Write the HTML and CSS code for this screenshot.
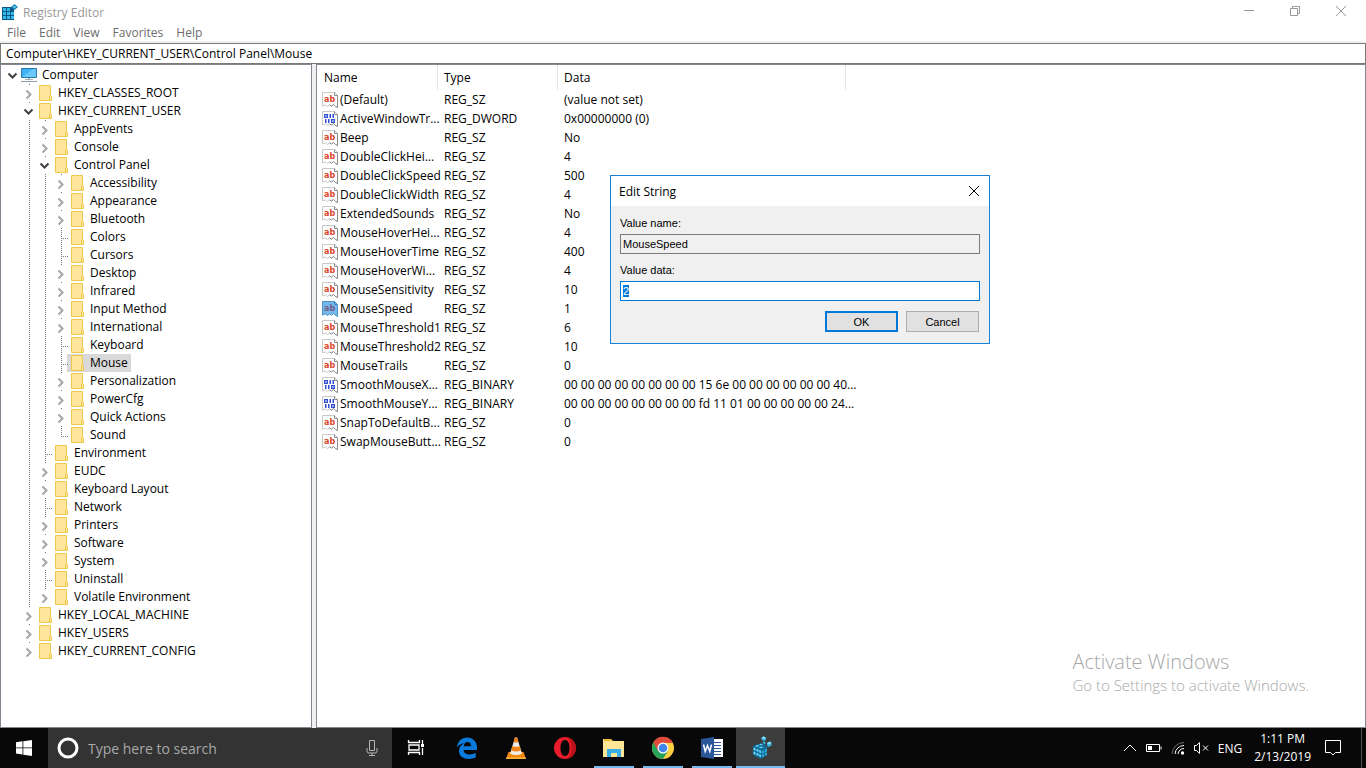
FILE: index.html
```html
<!DOCTYPE html>
<html lang="en">
<head>
  <meta charset="UTF-8" />
  <meta name="viewport" content="width=device-width, initial-scale=1" />
  <title>Registry Editor</title>
  <link rel="stylesheet" href="styles.css">
</head>
<body>
  <!-- shared icons -->
  <svg class="sprite" aria-hidden="true">
    <symbol id="folder" viewBox="0 0 16 16">
      <path d="M.5.5h11v10l1 1v4h-12z" fill="#ffe69c" stroke="#ecc84c"/>
      <path d="M10.500 15v-4l1-1" fill="none" stroke="#ecc84c"/>
    </symbol>
    <symbol id="closed" viewBox="0 0 16 17">
      <path d="M6.500 5.500l4 4-4 4" fill="none" stroke="#a6a6a6" stroke-width="2"/>
    </symbol>
    <symbol id="opened" viewBox="0 0 16 17">
      <path d="M4.500 6.500l4 4 4-4" fill="none" stroke="#404040" stroke-width="2"/>
    </symbol>
    <symbol id="page" viewBox="0 0 16 16">
      <path d="M.5.5h12l3 3v12l-2-1-2-2-2 1.500-2-1-2 1.500-2-1.500-3 1z" fill="#fff" stroke="#c8c8c8"/>
      <path d="M12.500.5v3h3v12l-2-1-2-2-2 1.500-2-1" fill="none" stroke="#8c8c8c"/>
    </symbol>
    <symbol id="page-selected" viewBox="0 0 16 16">
      <path d="M.5.5h12l3 3v12l-2-1-2-2-2 1.500-2-1-2 1.500-2-1.500-3 1z" fill="#77b8ea" stroke="#4a94cc"/>
      <path d="M12.500.5v3h3" fill="none" stroke="#3f83b8"/>
    </symbol>
    <symbol id="binary" viewBox="0 0 16 16">
      <path d="M2 3h4v4H2zM3.500 4v2h1V4zM7.500 3H9v4H7.500zM10.500 3H12v4h-1.500zM3 8h1.500v4H3zM6 8h1.500v4H6zM9 8h4v4H9zM10.500 9v2h1V9z" fill="#2f4fd4" fill-rule="evenodd"/>
    </symbol>
  </svg>

  <div class="window">
    <header class="titlebar">
      <svg class="app-icon" viewBox="0 0 16 16">
        <path d="M0 3h12v13H0z" fill="#0b5a86"/>
        <path d="M1 4h3v3H1zM5 4h3v3H5zM1 8h3v3H1zM5 8h3v3H5zM9 8h3v3H9zM1 12h3v3H1zM5 12h3v3H5zM9 12h3v3H9z" fill="#35b8ea"/>
        <path d="M12.500 0l3.500 3-3.500 3L9 3z" fill="#1b86b8"/>
        <path d="M12.500 1.500L14 3l-1.500 1.500L11 3z" fill="#5bd0f5"/>
      </svg>
      <h1>Registry Editor</h1>
      <div class="window-buttons">
        <button type="button" aria-label="Minimize"><svg viewBox="0 0 12 12"><path d="M1 5.500h10"/></svg></button>
        <button type="button" aria-label="Restore"><svg viewBox="0 0 12 12"><path d="M1.500 3.500h7v7h-7zM3.500 3V1.500h7v7H9"/></svg></button>
        <button type="button" aria-label="Close"><svg viewBox="0 0 12 12"><path d="M1 1l10 10M11 1L1 11"/></svg></button>
      </div>
    </header>

    <nav class="menubar">
      <button type="button">File</button>
      <button type="button">Edit</button>
      <button type="button">View</button>
      <button type="button">Favorites</button>
      <button type="button">Help</button>
    </nav>

    <input class="address" type="text" aria-label="Address" value="Computer\HKEY_CURRENT_USER\Control Panel\Mouse" />

    <main class="panes">
      <div class="tree">
        <div class="node">
          <button type="button" class="toggle" aria-label="Collapse"><svg><use href="#opened"/></svg></button>
          <svg class="icon" viewBox="0 0 16 16">
            <path d="M.5 1.500h15v9H.5z" fill="#3fb1f5" stroke="#2a78a8"/>
            <path d="M1 10L12 2h3v8z" fill="#6bc8fa"/>
            <path d="M7 11h2v1H7zM4 12h8v1H4z" fill="#9fb2c0"/>
            <path d="M0 14.500h16" stroke="#8d9dab"/>
          </svg>
          <span>Computer</span>
        </div>
        <ul id="treeRoot"></ul>
      </div>

      <div class="list">
        <table>
          <thead>
            <tr><th class="col-name">Name</th><th class="col-type">Type</th><th class="col-data">Data</th><th></th></tr>
          </thead>
          <tbody id="values"></tbody>
        </table>
        <div class="watermark">
          <p class="watermark-title">Activate Windows</p>
          <p>Go to Settings to activate Windows.</p>
        </div>
      </div>
    </main>
  </div>

  <form class="dialog" role="dialog" aria-labelledby="dialogTitle" onsubmit="event.preventDefault();">
    <div class="dialog-title">
      <h2 id="dialogTitle">Edit String</h2>
      <button type="button" aria-label="Close"><svg viewBox="0 0 12 12"><path d="M1 1l10 10M11 1L1 11"/></svg></button>
    </div>
    <div class="dialog-body">
      <label for="valueName">Value name:</label>
      <input type="text" id="valueName" value="MouseSpeed" readonly />
      <label for="valueData">Value data:</label>
      <input type="text" id="valueData" value="2" />
      <div class="dialog-buttons">
        <button type="submit" class="default">OK</button>
        <button type="button">Cancel</button>
      </div>
    </div>
  </form>

  <footer class="taskbar">
    <button type="button" class="task start" aria-label="Start">
      <svg viewBox="0 0 16 16"><path d="M0 2.200L6.500 1.300v6.200H0zM7.300 1.200L16 0v7.500H7.300zM0 8.300h6.500v6.200L0 13.600zM7.300 8.300H16V16l-8.700-1.200z" fill="#fff"/></svg>
    </button>
    <div class="search">
      <svg class="cortana" viewBox="0 0 22 22"><circle cx="11" cy="11" r="9" fill="none" stroke="#fff" stroke-width="3"/></svg>
      <input type="text" aria-label="Search" placeholder="Type here to search" />
      <svg class="mic" viewBox="0 0 12 18"><path d="M3.500 1.500h5v10h-5zM1 9v3q0 2 2 2h6q2 0 2-2V9M6 14v2.500M3 16.500h6" fill="none" stroke="#b5b5b5"/></svg>
    </div>
    <button type="button" class="task taskview" aria-label="Task view">
      <svg viewBox="0 0 24 24"><path d="M4.500 4v2.500h11V4M4.500 19v-2.500h11V19M5 9h10v5H5zM18.500 4v4M18.500 12v7" fill="none" stroke="#fff" stroke-width="1.300"/><path d="M17 8h3v3h-3z" fill="#fff"/></svg>
    </button>
    <button type="button" class="task" aria-label="Edge">
      <svg viewBox="0 0 24 24"><path d="M2 11.500C2.500 5 7 1.500 12 1.500c6 0 10 4.500 10 9.500v3H8.500c.3 3 3 4.500 6 4.500 2.500 0 4.500-.7 6.300-1.700v4.400c-2 1.200-4.300 1.700-7 1.700C7.500 22.900 4 19.500 4 15c0-3.500 2-6.500 5.500-8C5.500 7.500 3 9.500 2 11.500zM8.700 10.300H16C16 7.500 14.800 6 12.500 6S9 8 8.700 10.300z" fill="#0b7bdb"/></svg>
    </button>
    <button type="button" class="task" aria-label="VLC">
      <svg viewBox="0 0 24 24"><path d="M4.500 16h15L22 23H2z" fill="#f28a10"/><path d="M2.500 21.500h19L22 23H2z" fill="#ffb13d"/><path d="M11 1.500h2L18 17.500q-6 3-12 0z" fill="#ececec"/><path d="M10.900 1.500h2.200l1.300 4.500q-2.400 1-4.800 0zM8.300 10q3.700 1.700 7.400 0l1.300 4.500q-5 2.200-10 0z" fill="#f18416"/></svg>
    </button>
    <button type="button" class="task" aria-label="Opera">
      <svg viewBox="0 0 24 24"><path fill-rule="evenodd" d="M12 1a11 11 0 100 22 11 11 0 000-22zm0 3c3 0 4.500 3.500 4.500 8S15 20 12 20s-4.500-3.500-4.500-8S9 4 12 4z" fill="#e81c2a"/><path d="M14 1.200c6 1 9 5.800 9 10.800s-3 9.800-9 10.800c3-2 4.500-6 4.500-10.800S17 3.200 14 1.200z" fill="#a90c16" opacity=".7"/></svg>
    </button>
    <button type="button" class="task running" aria-label="File Explorer">
      <svg viewBox="0 0 24 24"><path d="M1 3h8l2 2h11v16H1z" fill="#ffe596"/><path d="M2 3h7l1 2H2z" fill="#f2b92b"/><path d="M5 13h14v8h-4v-4H9v4H5z" fill="#38aee6"/></svg>
    </button>
    <button type="button" class="task running" aria-label="Chrome">
      <svg viewBox="0 0 24 24"><circle cx="12" cy="12" r="11" fill="#ffd040"/><path d="M12 12L2.500 6.500A11 11 0 0012 23l5-8z" fill="#26a35a"/><path d="M2.500 6.500A11 11 0 0122 7H12l-5 8z" fill="#e24a3b"/><circle cx="12" cy="12" r="5.500" fill="#fff"/><circle cx="12" cy="12" r="4.300" fill="#4285e8"/></svg>
    </button>
    <button type="button" class="task running" aria-label="Word">
      <svg viewBox="0 0 24 24"><path d="M13 3h10v18H13z" fill="#fff"/><path d="M14 6.500h7M14 9.500h7M14 12.500h7M14 15.500h7M14 18.500h7" stroke="#2b579a"/><path d="M1 3l13-2v22L1 21z" fill="#2b579a"/><path d="M3.500 8.500l1.700 7 2.300-6 2.300 6 1.700-7" fill="none" stroke="#fff" stroke-width="1.500"/></svg>
    </button>
    <button type="button" class="task running active" aria-label="Registry Editor">
      <svg viewBox="0 0 24 24"><path d="M4 10l8-3 6 3v9l-6 4-8-4z" fill="#0f6c98"/><path d="M4.500 11.500l2 .8v2.500l-2-.8zM7.500 12.700l2 .8V16l-2-.8zM4.500 15.500l2 .8v2.500l-2-.8zM7.500 16.700l2 .8V20l-2-.8zM10.200 14l1.800.8v2.500l-1.800-.8zM10.200 18l1.800.8v2.500l-1.800-.8zM6 10l2.500-1 2 .8L8 11zM9.500 11.500l3-1 2 .8-2.500 1zM10 8.500L12 7.700l2 .8-2 .8z" fill="#6cd6f5"/><path d="M13 15l2-1v3l-2 1zM16 13.500l2-1v3l-2 1zM13 19l2-1v2.500l-2 1zM16 17.500l2-1V19l-2 1z" fill="#2fa5d4"/><path d="M12.500 1.500l2.500-1 2 1.500v2l-2.500 1-2-1.500zM18 7l3-1.500 1.500 1.500v2.500L19.500 11 18 9.500zM13.500 6l1.500-.8 1.500 1v1.500l-1.500.7z" fill="#35b4e2"/><path d="M12.500 1.500l2.500-1 2 1.500-2.500 1zM18 7l3-1.500 1.500 1.500-3 1.500z" fill="#8be2fa"/></svg>
    </button>

    <div class="tray">
      <button type="button" aria-label="Show hidden icons"><svg viewBox="0 0 16 16"><path d="M2 11l6-6 6 6"/></svg></button>
      <svg viewBox="0 0 16 16"><path d="M.5 4.500h13v7H.5zM15 6.500v3"/><path d="M2 6h4v4H2z" class="solid"/></svg>
      <svg viewBox="0 0 16 16"><path d="M2 14A12 12 0 0114 2.500" opacity=".4"/><path d="M5 14a9 9 0 019-8.500M8 14a6 6 0 016-5.500" /><circle cx="12.500" cy="13" r="1.700" class="solid"/></svg>
      <svg viewBox="0 0 16 16"><path d="M.5 5.500h2l3-3v11l-3-3h-2zM9 5.500l5 5M14 5.500l-5 5"/></svg>
      <button type="button" class="lang">ENG</button>
      <button type="button" class="clock"><span>1:11 PM</span><span>2/13/2019</span></button>
      <button type="button" aria-label="Notifications" class="notify"><svg viewBox="0 0 18 18"><path d="M1.500 1.500h15v12h-5l-2.500 2.500-2.500-2.500h-5z"/></svg></button>
      <button type="button" class="show-desktop" aria-label="Show desktop"></button>
    </div>
  </footer>

  <script src="script.js"></script>
</body>
</html>
```

FILE: styles.css
```css
* {
  box-sizing: border-box;
}
body {
  font-family: "Open Sans", "Noto Sans", sans-serif;
  font-size: 12px;
  color: #000;
  margin: 0;
  height: 100vh;
  display: flex;
  flex-direction: column;
  overflow: hidden;
}
button,
input {
  font: inherit;
  color: inherit;
  margin: 0;
}
button {
  border: none;
  background: none;
  padding: 0;
}
svg {
  flex-shrink: 0;
}
h1,
h2,
p {
  margin: 0;
  font-size: 12px;
  font-weight: normal;
}
.sprite {
  display: none;
}
.ab {
  font-family: "DejaVu Sans", sans-serif;
  font-size: 8px;
  font-weight: bold;
  fill: #d9482b;
}
.ab-selected {
  fill: #6c5f86;
}
.window {
  flex: 1;
  min-height: 0;
  display: flex;
  flex-direction: column;
  background: #fff;
}

/* title bar and menu */
.titlebar {
  display: flex;
  align-items: center;
  height: 24px;
  padding-left: 2px;
  color: #999;
}
.app-icon {
  width: 16px;
  height: 16px;
  margin-right: 5px;
}
.window-buttons {
  display: flex;
  margin-left: auto;
}
.window-buttons button {
  width: 46px;
  height: 22px;
  padding-right: 4px;
}
.window-buttons svg {
  width: 12px;
  height: 12px;
  fill: none;
  stroke: #999;
}
.menubar {
  display: flex;
  gap: 13px;
  height: 19px;
  line-height: 17px;
  padding-left: 7px;
  color: #6d6d6d;
  border-bottom: 2px solid #f0f0f0;
}
.address {
  height: 21px;
  width: 100%;
  border: 1px solid #7a7a7a;
  padding: 0 5px;
}

/* tree */
.panes {
  flex: 1;
  min-height: 0;
  display: flex;
  gap: 4px;
  background: #f0f0f0;
}
.tree,
.list {
  background: #fff;
  border: 1px solid #828790;
}
.tree {
  width: 312px;
  padding: 1px 0 0 3px;
  overflow: hidden;
}
.tree ul {
  list-style: none;
  margin: 0;
  padding-left: 16px;
}
.tree li {
  background: repeating-linear-gradient(#777 0 1px, transparent 1px 2px) 9px 0 / 1px 100% no-repeat;
}
.tree li:last-child {
  background-size: 1px 10px;
}
.node {
  display: flex;
  align-items: center;
  height: 18px;
  line-height: 18px;
}
.toggle {
  width: 16px;
  height: 17px;
  margin-top: 1px;
  background: #fff;
}
.toggle svg {
  display: block;
  width: 16px;
  height: 17px;
}
.branch {
  width: 7px;
  height: 18px;
  margin-left: 9px;
  background: repeating-linear-gradient(90deg, #777 0 1px, transparent 1px 2px) 0 10px / 100% 1px no-repeat;
}
.icon {
  width: 16px;
  height: 16px;
}
.node .icon {
  margin: 0 3px 0 1px;
}
.tree ul .icon {
  margin: 0 0 0 3px;
}
.node span:last-child {
  padding: 0 3px;
}
.tree > .node span:last-child {
  padding: 0 2px;
}
.node.selected {
  background: linear-gradient(#d9d9d9, #d9d9d9) 15px 0 no-repeat;
  width: fit-content;
}

/* value list */
.list {
  flex: 1;
  display: flex;
  flex-direction: column;
}
.list table {
  width: 100%;
  table-layout: fixed;
  border-collapse: separate;
  border-spacing: 0;
}
.list th {
  height: 25px;
  padding: 0 6px;
  font-weight: normal;
  text-align: left;
  border-right: 1px solid #e5e5e5;
}
.list th:last-child {
  border: none;
}
.list .col-name {
  width: 121px;
  padding-left: 7px;
}
.list .col-type {
  width: 120px;
}
.list .col-data {
  width: 288px;
}
.list td {
  height: 19px;
  line-height: 19px;
  padding: 0 0 0 6px;
  white-space: nowrap;
}
.list td:first-child {
  padding-left: 5px;
}
.value {
  display: flex;
  align-items: center;
  gap: 2px;
}
.watermark {
  margin: auto 56px 32px auto;
  color: #a8a8a8;
  font-weight: 300;
}
.watermark p {
  font-size: 15px;
  font-weight: inherit;
  line-height: 20px;
}
.watermark .watermark-title {
  font-size: 20px;
  line-height: 26px;
}

/* edit dialog */
.dialog {
  position: absolute;
  left: 610px;
  top: 175px;
  width: 380px;
  border: 1px solid #1883d7;
  background: #f0f0f0;
}
.dialog-title {
  display: flex;
  align-items: center;
  justify-content: space-between;
  height: 30px;
  padding: 0 9px 0 8px;
  background: #fff;
}
.dialog-title svg {
  display: block;
  width: 12px;
  height: 12px;
  stroke: #000;
}
.dialog-body {
  display: flex;
  flex-direction: column;
  padding: 10px 9px 11px;
  font-family: "Liberation Sans", Arial, sans-serif;
  font-size: 11px;
}
.dialog-body label {
  line-height: 14px;
  margin-bottom: 4px;
}
.dialog-body input {
  height: 20px;
  padding: 0 2px;
  margin-bottom: 9px;
  border: 1px solid #7a7a7a;
  background: #f0f0f0;
}
.dialog-body input#valueData {
  background: #fff;
  border-color: #0078d7;
  outline: none;
}
::selection {
  background: #0078d7;
  color: #fff;
}
.dialog-buttons {
  display: flex;
  justify-content: flex-end;
  gap: 8px;
  padding: 1px 1px 0 0;
}
.dialog-buttons button {
  width: 73px;
  height: 21px;
  background: #e1e1e1;
  border: 1px solid #adadad;
}
.dialog-buttons .default {
  border: 2px solid #0078d7;
}

/* taskbar */
.taskbar {
  display: flex;
  height: 40px;
  background: #080808;
  color: #fff;
}
.task {
  width: 49px;
  padding: 0 4px;
}
.task svg {
  display: block;
  width: 24px;
  height: 24px;
  margin: auto;
}
.start,
.taskview {
  width: 48px;
}
.start svg {
  width: 16px;
  height: 16px;
}
.taskview {
  margin-right: 2px;
}
.running {
  background: linear-gradient(#76b9ed, #76b9ed) center bottom / 40px 2px no-repeat;
}
.running.active {
  background-color: #3c3c3c;
  background-size: 49px 2px;
}
.search {
  display: flex;
  align-items: center;
  width: 344px;
  padding: 0 14px 0 9px;
  background: #333;
}
.search input {
  flex: 1;
  min-width: 0;
  border: none;
  background: none;
  padding: 0 9px;
  font-size: 14px;
}
.search input::placeholder {
  color: #a8a8a8;
}
.cortana {
  width: 22px;
  height: 22px;
}
.mic {
  width: 12px;
  height: 18px;
}
.tray {
  display: flex;
  align-items: center;
  gap: 8px;
  margin-left: auto;
}
.tray svg {
  display: block;
  width: 16px;
  height: 16px;
  fill: none;
  stroke: #fff;
}
.tray .solid {
  fill: #fff;
  stroke: none;
}
.clock {
  display: flex;
  flex-direction: column;
  align-items: center;
  line-height: 18px;
  margin: 0 5px 0 4px;
}
.tray .notify svg {
  width: 18px;
  height: 18px;
}
.show-desktop {
  width: 5px;
  height: 40px;
  margin-left: 11px;
  border-left: 1px solid #555;
}
```

FILE: script.js
```js
// true = has subkeys, an array = expanded
const keys = [
  ["HKEY_CLASSES_ROOT", true],
  ["HKEY_CURRENT_USER", [
    ["AppEvents", true],
    ["Console", true],
    ["Control Panel", [
      ["Accessibility", true], ["Appearance", true], ["Bluetooth", true],
      ["Colors"], ["Cursors"], ["Desktop", true], ["Infrared", true],
      ["Input Method", true], ["International", true], ["Keyboard"],
      ["Mouse"], ["Personalization", true], ["PowerCfg", true],
      ["Quick Actions", true], ["Sound"]
    ]],
    ["Environment"], ["EUDC", true], ["Keyboard Layout", true], ["Network"],
    ["Printers", true], ["Software", true], ["System", true],
    ["Uninstall"], ["Volatile Environment", true]
  ]],
  ["HKEY_LOCAL_MACHINE", true],
  ["HKEY_USERS", true],
  ["HKEY_CURRENT_CONFIG", true]
];

const values = [
  ["(Default)", "REG_SZ", "(value not set)"],
  ["ActiveWindowTr...", "REG_DWORD", "0x00000000 (0)"],
  ["Beep", "REG_SZ", "No"],
  ["DoubleClickHei...", "REG_SZ", "4"],
  ["DoubleClickSpeed", "REG_SZ", "500"],
  ["DoubleClickWidth", "REG_SZ", "4"],
  ["ExtendedSounds", "REG_SZ", "No"],
  ["MouseHoverHei...", "REG_SZ", "4"],
  ["MouseHoverTime", "REG_SZ", "400"],
  ["MouseHoverWi...", "REG_SZ", "4"],
  ["MouseSensitivity", "REG_SZ", "10"],
  ["MouseSpeed", "REG_SZ", "1"],
  ["MouseThreshold1", "REG_SZ", "6"],
  ["MouseThreshold2", "REG_SZ", "10"],
  ["MouseTrails", "REG_SZ", "0"],
  ["SmoothMouseX...", "REG_BINARY", "00 00 00 00 00 00 00 00 15 6e 00 00 00 00 00 00 40..."],
  ["SmoothMouseY...", "REG_BINARY", "00 00 00 00 00 00 00 00 fd 11 01 00 00 00 00 00 24..."],
  ["SnapToDefaultB...", "REG_SZ", "0"],
  ["SwapMouseButt...", "REG_SZ", "0"]
];

function renderKeys(list) {
  return list.map(([name, sub]) => {
    const open = Array.isArray(sub);
    const toggle = sub
      ? `<button type="button" class="toggle" aria-label="${open ? "Collapse" : "Expand"}"><svg><use href="#${open ? "opened" : "closed"}"/></svg></button>`
      : `<span class="branch"></span>`;
    return `<li><div class="node${name === "Mouse" ? " selected" : ""}">${toggle}<svg class="icon"><use href="#folder"/></svg><span>${name}</span></div>${open ? `<ul>${renderKeys(sub)}</ul>` : ""}</li>`;
  }).join("");
}

// string values get an "ab" page, everything else the binary one
function valueIcon(name, type) {
  const selected = name === "MouseSpeed";
  const mark = type === "REG_SZ"
    ? `<text x="2" y="10" class="ab${selected ? " ab-selected" : ""}">ab</text>`
    : `<use href="#binary"/>`;
  return `<svg class="icon" viewBox="0 0 16 16"><use href="#${selected ? "page-selected" : "page"}"/>${mark}</svg>`;
}

document.getElementById("treeRoot").innerHTML = renderKeys(keys);

document.getElementById("values").innerHTML = values.map(([name, type, data]) =>
  `<tr><td><div class="value">${valueIcon(name, type)}${name}</div></td><td>${type}</td><td>${data}</td><td></td></tr>`
).join("");

const valueData = document.getElementById("valueData");
valueData.focus();
valueData.select();
```
